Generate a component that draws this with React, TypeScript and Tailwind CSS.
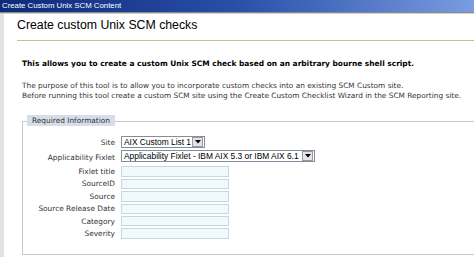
import React from "react";

const Arrow = () => (
  <div className="w-[11px] h-[10px] bg-[#e4e4e4] border border-[#9a9a9a] flex items-center justify-center mr-[1px] shrink-0">
    <svg width="6" height="4" viewBox="0 0 6 4"><path d="M0 0 L6 0 L3 3.5 Z" fill="#000" /></svg>
  </div>
);

const Select = ({ text, w }: { text: string; w: string }) => (
  <div className={`${w} h-[12px] bg-white border border-[#7f8f9f] flex items-center justify-between`}>
    <span className="pl-[2px] text-[8.4px] leading-none text-black whitespace-nowrap" style={{ fontFamily: '"Liberation Sans", Arial, sans-serif' }}>{text}</span>
    <Arrow />
  </div>
);

const Input = () => <div className="w-[108px] h-[10.4px] bg-[#f0f9fc] border border-[#c9d6de]" />;

const Label = ({ children }: { children: React.ReactNode }) => (
  <div className="text-right text-[7.4px] leading-none text-[#333] whitespace-nowrap flex items-center justify-end">{children}</div>
);

export default function App() {
  const body = { fontFamily: '"DejaVu Sans", Verdana, sans-serif' };
  return (
    <div className="w-[474px] h-[257px] overflow-hidden bg-white flex flex-col" style={body}>
      <div className="h-[12px] bg-gradient-to-r from-[#0c2a7a] via-[#2a4fa8] to-[#7a9ce0] flex items-center pl-[2px]">
        <span className="text-white text-[7.8px] leading-none" style={{ fontFamily: '"Liberation Sans", Tahoma, sans-serif' }}>Create Custom Unix SCM Content</span>
      </div>
      <div className="h-[1px] bg-[#8a8a8a]" />
      <div className="h-[1px] bg-[#d0d0d0]" />
      <div className="flex flex-1 min-h-0">
        <div className="w-[4px] bg-[#e2e2e2]" />
        <div className="flex-1 flex flex-col pl-[13px]">
          <div className="pt-[4px] h-[26px] text-[12.3px] leading-none text-black" style={{ fontFamily: '"Liberation Sans", Tahoma, sans-serif' }}>
            <div className="pt-[1px]">Create custom Unix SCM checks</div>
          </div>
          <div className="h-[1px] bg-[#b6cc84]" />
          <div className="pl-[5px] flex flex-col">
            <div className="mt-[19px] text-[7.45px] font-bold leading-none text-black whitespace-nowrap">
              This allows you to create a custom Unix SCM check based on an arbitrary bourne shell script.
            </div>
            <div className="mt-[14px] text-[7.38px] leading-[10px] text-[#333] whitespace-nowrap">
              <div>The purpose of this tool is to allow you to incorporate custom checks into an existing SCM Custom site.</div>
              <div>Before running this tool create a custom SCM site using the Create Custom Checklist Wizard in the SCM Reporting site.</div>
            </div>
            <div className="relative mr-[-4px] h-[134px] border border-[#c8c8c8] mt-[20px]">
              <div className="absolute left-[4px] top-[-7px] h-[11px] px-[5px] bg-[#d6dee9] flex items-center text-[7.4px] leading-none text-[#333] whitespace-nowrap">
                Required Information
              </div>
              <div className="grid grid-cols-[92px_auto] gap-x-[6px] gap-y-[2px] pt-[14px] justify-start">
                <Label>Site</Label>
                <Select text="AIX Custom List 1" w="w-[84px]" />
                <Label>Applicability Fixlet</Label>
                <div className="mb-[2px]"><Select text="Applicability Fixlet - IBM AIX 5.3 or IBM AIX 6.1" w="w-[194px]" /></div>
                <Label>Fixlet title</Label>
                <Input />
                <Label>SourceID</Label>
                <Input />
                <Label>Source</Label>
                <Input />
                <Label>Source Release Date</Label>
                <Input />
                <Label>Category</Label>
                <Input />
                <Label>Severity</Label>
                <Input />
              </div>
            </div>
          </div>
        </div>
      </div>
    </div>
  );
}
